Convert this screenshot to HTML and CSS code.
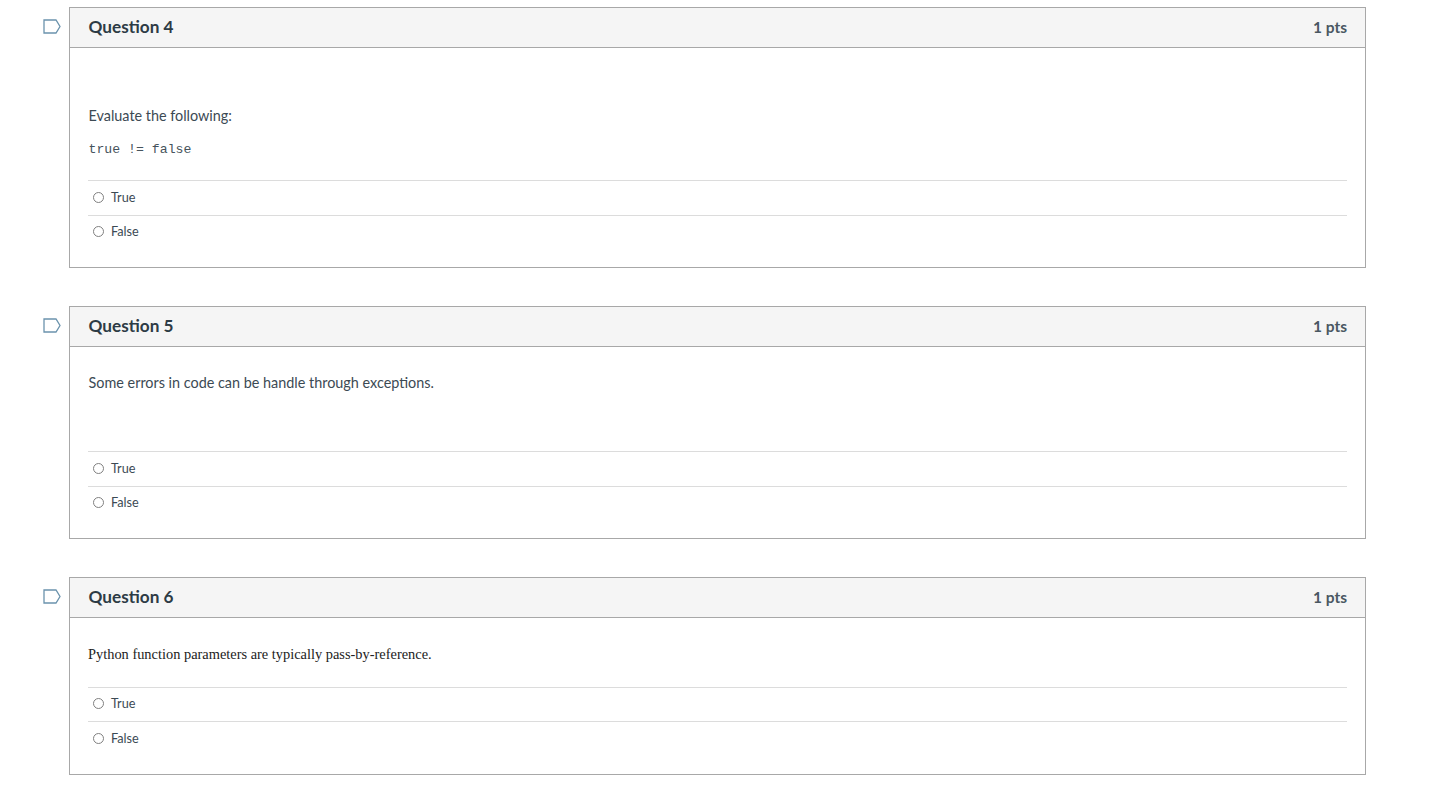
FILE: index.html
```html
<!DOCTYPE html>
<html lang="en">
<head>
<meta charset="utf-8">
<title>Quiz</title>
<link rel="stylesheet" href="styles.css">
</head>
<body>
<main class="quiz">
  <section class="question q4">
    <svg class="flag" viewBox="0 0 20 15" width="20" height="15"><path d="M2 1H14L18 7.500L14 14H2Z"/></svg>
    <header class="head"><h2>Question 4</h2><span class="pts">1 pts</span></header>
    <div class="body">
      <div class="text">
        <p>Evaluate the following:</p>
        <p class="code">true != false</p>
      </div>
      <div class="answer first"><span class="radio"></span><span>True</span></div>
      <div class="answer"><span class="radio"></span><span>False</span></div>
    </div>
  </section>
  <section class="question q5">
    <svg class="flag" viewBox="0 0 20 15" width="20" height="15"><path d="M2 1H14L18 7.500L14 14H2Z"/></svg>
    <header class="head"><h2>Question 5</h2><span class="pts">1 pts</span></header>
    <div class="body">
      <div class="text">
        <p>Some errors in code can be handle through exceptions.</p>
      </div>
      <div class="answer first"><span class="radio"></span><span>True</span></div>
      <div class="answer"><span class="radio"></span><span>False</span></div>
    </div>
  </section>
  <section class="question q6">
    <svg class="flag" viewBox="0 0 20 15" width="20" height="15"><path d="M2 1H14L18 7.500L14 14H2Z"/></svg>
    <header class="head"><h2>Question 6</h2><span class="pts">1 pts</span></header>
    <div class="body">
      <div class="text">
        <p class="serif">Python function parameters are typically pass-by-reference.</p>
      </div>
      <div class="answer first"><span class="radio"></span><span>True</span></div>
      <div class="answer"><span class="radio"></span><span>False</span></div>
    </div>
  </section>
</main>
</body>
</html>
```
FILE: styles.css
```css
* { box-sizing: border-box; }
html, body { margin: 0; padding: 0; background: #fff; }
body { font-family: Lato, "Liberation Sans", sans-serif; color: #2d3b45; overflow: hidden; height: 809px; }
.quiz { width: 1297px; margin-left: 69px; padding-top: 7px; display: flex; flex-direction: column; gap: 38px; }
.question { position: relative; border: 1px solid #a8a8a8; }
.q4 { height: 261px; }
.q5 { height: 233px; }
.q6 { height: 198px; }
.flag { position: absolute; left: -28px; top: 11px; fill: none; stroke: #6b93ad; stroke-width: 1.300; }
.head { height: 40px; background: #f5f5f5; border-bottom: 1px solid #a8a8a8; padding: 0 18px 2px 18.500px; display: flex; justify-content: space-between; align-items: center; }
.head h2 { margin: 0; font-size: 17.200px; font-weight: 700; color: #2d3b45; }
.pts { font-size: 15.500px; font-weight: 700; color: #4a5862; }
.body { padding: 0 18px; }
.text p { margin: 0; font-size: 14.400px; line-height: 20px; color: #3c4a54; padding-left: 0.500px; }
.q4 .text { height: 132px; padding-top: 58px; }
.q5 .text { height: 104px; padding-top: 26px; }
.q6 .text { height: 69px; padding-top: 26px; }
.text .code { font-family: "Liberation Mono", monospace; font-size: 13.200px; margin-top: 14px; color: #46535c; }
.text .serif { font-family: "Liberation Serif", serif; font-size: 14.400px; color: #222; padding-left: 0; }
.answer { height: 35px; border-top: 1px solid #dcdcdc; padding: 0 0 4px 5px; display: flex; align-items: center; gap: 7px; font-size: 12.700px; color: #3c4a54; }
.answer.first { padding-bottom: 2px; }
.q6 .answer.first { height: 34px; }
.q6 .answer { padding-bottom: 3px; }
.radio { width: 11px; height: 11px; border: 1px solid #808080; border-radius: 50%; background: #fff; margin-top: 1px; }
```
